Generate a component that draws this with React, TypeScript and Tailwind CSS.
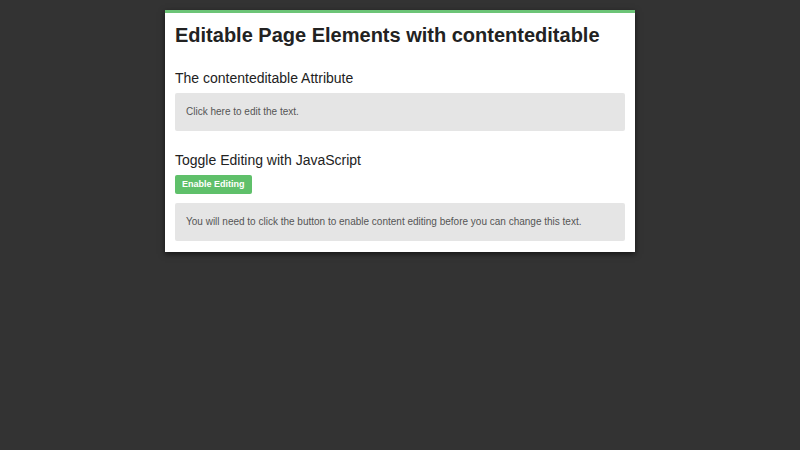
export default function App() {
  return (
    <div
      className="min-h-[450px] bg-[#333333] pt-[10px]"
      style={{ fontFamily: '"Liberation Sans", Arial, sans-serif' }}
    >
      <div className="mx-auto w-[470px] border-t-[3px] border-[#6cc477] bg-white px-[10px] pb-[11px] shadow-[0_2px_6px_rgba(0,0,0,0.6)]">
        <h1 className="pt-[9px] text-[20px] font-bold leading-[26px] text-[#222]">
          Editable Page Elements with contenteditable
        </h1>
        <h2 className="mt-[21px] text-[14px] leading-[18px] text-[#222]">
          The contenteditable Attribute
        </h2>
        <div className="mt-[6px] h-[38px] rounded-[2px] bg-[#e5e5e5] px-[11px] text-[10px] leading-[38px] text-[#555]">
          Click here to edit the text.
        </div>
        <h2 className="mt-[20px] text-[14px] leading-[18px] text-[#222]">
          Toggle Editing with JavaScript
        </h2>
        <button className="mt-[6px] block h-[19px] rounded-[2px] bg-[#5fc06a] px-[7px] text-[9px] font-bold leading-[19px] text-white">
          Enable Editing
        </button>
        <div className="mt-[9px] h-[38px] rounded-[2px] bg-[#e5e5e5] px-[11px] text-[10px] leading-[38px] text-[#555]">
          You will need to click the button to enable content editing before you can change this text.
        </div>
      </div>
    </div>
  );
}
